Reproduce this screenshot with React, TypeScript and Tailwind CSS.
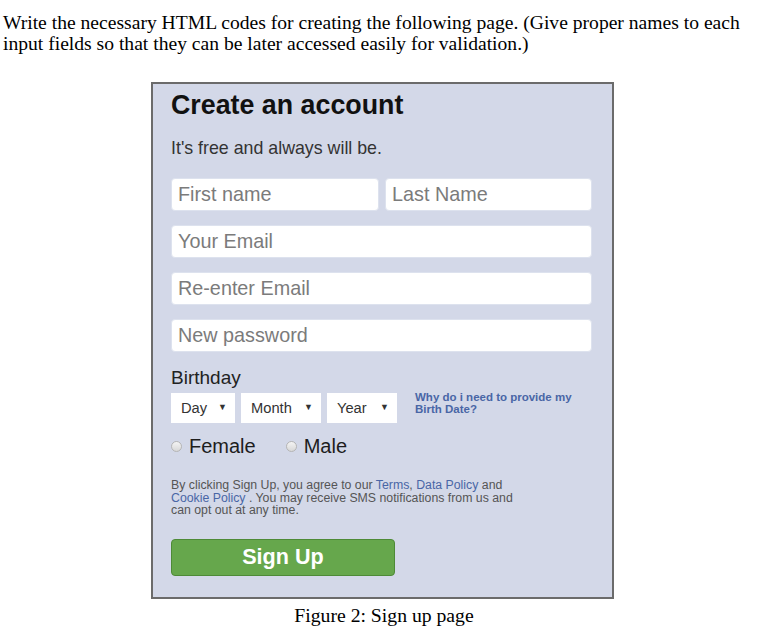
import React from "react";

const serif = { fontFamily: '"Liberation Serif", "Times New Roman", serif' };

const Field = ({ name, placeholder, className = "" }: { name: string; placeholder: string; className?: string }) => (
  <input
    name={name}
    placeholder={placeholder}
    className={`h-[33px] rounded-[4px] border border-[#dde2ee] bg-white px-[6px] text-[19.8px] text-[#333] placeholder:text-[#7b7b7b] outline-none ${className}`}
  />
);

const Select = ({ name, label, width }: { name: string; label: string; width: string }) => (
  <div className={`flex h-[30px] ${width} items-center justify-between bg-white pl-[10px] pr-[8px] text-[14.7px] text-[#333]`}>
    <span>{label}</span>
    <span className="text-[9px]">▼</span>
    <input type="hidden" name={name} />
  </div>
);

const Radio = ({ label }: { label: string }) => (
  <label className="flex items-center gap-[7px]">
    <span className="h-[11px] w-[11px] rounded-full border border-[#b5b5b5] bg-gradient-to-b from-[#f4f4f4] to-[#d8d8d8]" />
    <span className="text-[20px] leading-[24px] text-[#1d1d1d]">{label}</span>
  </label>
);

export default function App() {
  return (
    <div className="min-h-[633px] bg-white text-black">
      <p className="pl-[3px] pt-[12px] text-[19.6px] leading-[21px] whitespace-nowrap" style={serif}>
        Write the necessary HTML codes for creating the following page. (Give proper names to each
        <br />
        input fields so that they can be later accessed easily for validation.)
      </p>

      <div className="ml-[151px] mt-[28px] w-[463px] border-2 border-[#6b6b6b] bg-[#d3d8e8] pl-[18px] pr-[20px] pt-[6px] pb-[21px]" style={{ fontFamily: '"Liberation Sans", Arial, sans-serif' }}>
        <h1 className="text-[26.8px] font-bold leading-[30px] text-[#111]">Create an account</h1>
        <p className="mt-[17px] text-[17.8px] leading-[22px] text-[#333]">It's free and always will be.</p>

        <div className="mt-[19px] flex flex-col gap-[14px]">
          <div className="flex gap-[6px]">
            <Field name="firstname" placeholder="First name" className="w-[208px]" />
            <Field name="lastname" placeholder="Last Name" className="w-[207px]" />
          </div>
          <Field name="email" placeholder="Your Email" className="w-[421px]" />
          <Field name="reemail" placeholder="Re-enter Email" className="w-[421px]" />
          <Field name="password" placeholder="New password" className="w-[421px]" />
        </div>

        <div className="mt-[15px] text-[19px] leading-[22px] text-[#222]">Birthday</div>
        <div className="mt-[4px] flex items-start">
          <div className="flex gap-[6px]">
            <Select name="day" label="Day" width="w-[64px]" />
            <Select name="month" label="Month" width="w-[80px]" />
            <Select name="year" label="Year" width="w-[70px]" />
          </div>
          <p className="ml-[18px] mt-[-2px] text-[11.5px] font-semibold leading-[12px] text-[#4966a6]">
            Why do i need to provide my
            <br />
            Birth Date?
          </p>
        </div>

        <div className="mt-[11px] flex gap-[30px]">
          <Radio label="Female" />
          <Radio label="Male" />
        </div>

        <p className="mt-[21px] whitespace-nowrap text-[12.3px] leading-[12.6px] text-[#555]">
          By clicking Sign Up, you agree to our <span className="text-[#4966a6]">Terms</span>,{" "}
          <span className="text-[#4966a6]">Data Policy</span> and
          <br />
          <span className="text-[#4966a6]">Cookie Policy</span> . You may receive SMS notifications from us and
          <br />
          can opt out at any time.
        </p>

        <button className="mt-[22px] h-[37px] w-[224px] rounded-[4px] border border-[#4e8a37] bg-[#66a74c] text-[21.6px] font-bold text-white">
          Sign Up
        </button>
      </div>

      <p className="mt-[6px] w-[768px] text-center text-[19.7px] leading-[21px]" style={serif}>
        Figure 2: Sign up page
      </p>
    </div>
  );
}
